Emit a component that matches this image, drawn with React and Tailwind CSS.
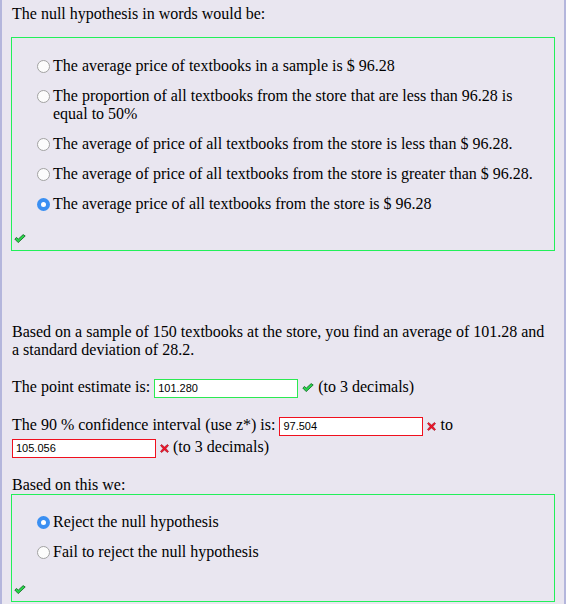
import React from "react";

const serif = { fontFamily: '"Liberation Serif", "Times New Roman", serif' };

function Radio({ checked }) {
    if (checked) {
        return (
            <span className="mt-[3px] mr-[3px] flex h-[13px] w-[13px] shrink-0 items-center justify-center rounded-full bg-[#3a8ff2]">
                <span className="h-[5px] w-[5px] rounded-full bg-white" />
            </span>
        );
    }
    return (
        <span className="mt-[3px] mr-[3px] h-[13px] w-[13px] shrink-0 rounded-full border border-[#a2a2a2] bg-[#fcfcfc]" />
    );
}

function Check() {
    return (
        <svg width="12" height="10" viewBox="0 0 12 10" className="inline-block">
            <path d="M0.8 5 L4.2 8.6 L11.2 2 L9.2 0.6 L4.2 5.2 L2.6 3.4 Z" fill="#27d84a" stroke="#1c6e2f" strokeWidth="0.9" strokeLinejoin="round" />
        </svg>
    );
}

function Cross() {
    return (
        <svg width="9" height="9" viewBox="0 0 9 9" className="inline-block">
            <path d="M1.5 0.5 L4.5 3 L7.5 0.5 L8.5 1.5 L6 4.5 L8.5 7.5 L7.5 8.5 L4.5 6 L1.5 8.5 L0.5 7.5 L3 4.5 L0.5 1.5 Z" fill="#f2142a" stroke="#9a1020" strokeWidth="0.6" strokeLinejoin="round" />
        </svg>
    );
}

function Field({ value, ok }) {
    return (
        <span
            className={
                "inline-block h-[19px] w-[144px] bg-white pl-[3px] align-middle text-[11px] leading-[17px] text-black border " +
                (ok ? "border-[#2bea52]" : "border-[#f0101e]")
            }
            style={{ fontFamily: '"Liberation Sans", Arial, sans-serif' }}
        >
            {value}
        </span>
    );
}

function ChoiceBox({ options, selected, className, checkClass }) {
    return (
        <div className={"ml-[9px] w-[544px] border border-[#22f05a] " + className}>
            <ul className="flex flex-col gap-[12px] pl-[25px]">
                {options.map((opt, i) => (
                    <li key={i} className="flex items-start">
                        <Radio checked={i === selected} />
                        <span className="max-w-[488px] text-[16px] leading-[18px]">{opt}</span>
                    </li>
                ))}
            </ul>
            <div className={"flex h-[18px] items-center pl-[2px] " + checkClass}>
                <Check />
            </div>
        </div>
    );
}

export default function App() {
    const hypotheses = [
        "The average price of textbooks in a sample is $ 96.28",
        "The proportion of all textbooks from the store that are less than 96.28 is equal to 50%",
        "The average of price of all textbooks from the store is less than $ 96.28.",
        "The average of price of all textbooks from the store is greater than $ 96.28.",
        "The average price of all textbooks from the store is $ 96.28",
    ];

    return (
        <div className="min-h-[604px] w-[566px] border-x-2 border-[#b4b6dc] bg-[#e9e6f0] text-black" style={serif}>
            <p className="pl-[10px] pt-[5px] text-[16px] leading-[18px]">The null hypothesis in words would be:</p>

            <ChoiceBox options={hypotheses} selected={4} className="mt-[14px] pt-[19px] pb-[2px]" checkClass="mt-[17px]" />

            <p className="mt-[72px] w-[553px] pl-[10px] text-[16px] leading-[18px]">
                Based on a sample of 150 textbooks at the store, you find an average of 101.28 and a standard deviation of 28.2.
            </p>

            <p className="mt-[17px] pl-[10px] text-[16px] leading-[22px]">
                The point estimate is: <Field value="101.280" ok /> <Check /> (to 3 decimals)
            </p>

            <p className="mt-[16px] w-[480px] pl-[10px] text-[16px] leading-[22px]">
                The 90 % confidence interval (use z*) is: <Field value="97.504" /> <Cross /> to <Field value="105.056" /> <Cross /> (to 3 decimals)
            </p>

            <p className="mt-[18px] pl-[10px] text-[16px] leading-[18px]">Based on this we:</p>

            <ChoiceBox
                options={["Reject the null hypothesis", "Fail to reject the null hypothesis"]}
                selected={0}
                className="pt-[18px] pb-[2px]"
                checkClass="mt-[20px]"
            />
        </div>
    );
}
